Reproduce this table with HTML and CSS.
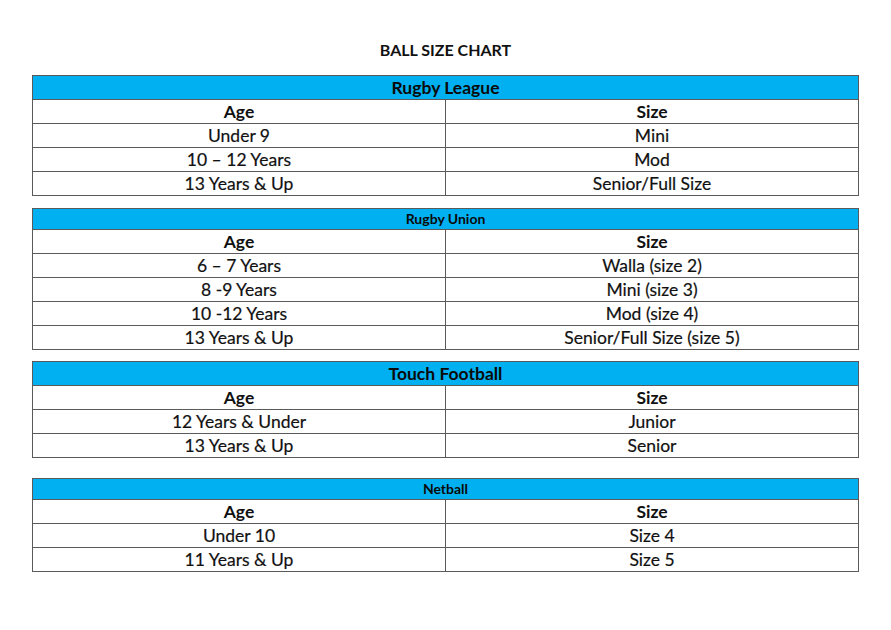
FILE: index.html
```html
<!DOCTYPE html>
<html>
<head>
<meta charset="utf-8">
<link rel="stylesheet" href="styles.css">
</head>
<body>
<div class="page">
  <h1 class="title">BALL SIZE CHART</h1>
  <div class="charts">
    <table class="chart">
      <tr><th colspan="2" class="sport">Rugby League</th></tr>
      <tr><th>Age</th><th>Size</th></tr>
      <tr><td>Under 9</td><td>Mini</td></tr>
      <tr><td>10 – 12 Years</td><td>Mod</td></tr>
      <tr><td>13 Years &amp; Up</td><td>Senior/Full Size</td></tr>
    </table>
    <table class="chart">
      <tr><th colspan="2" class="sport small">Rugby Union</th></tr>
      <tr><th>Age</th><th>Size</th></tr>
      <tr><td>6 – 7 Years</td><td>Walla (size 2)</td></tr>
      <tr><td>8 -9 Years</td><td>Mini (size 3)</td></tr>
      <tr><td>10 -12 Years</td><td>Mod (size 4)</td></tr>
      <tr><td>13 Years &amp; Up</td><td>Senior/Full Size (size 5)</td></tr>
    </table>
    <table class="chart">
      <tr><th colspan="2" class="sport">Touch Football</th></tr>
      <tr><th>Age</th><th>Size</th></tr>
      <tr><td>12 Years &amp; Under</td><td>Junior</td></tr>
      <tr><td>13 Years &amp; Up</td><td>Senior</td></tr>
    </table>
    <table class="chart last">
      <tr><th colspan="2" class="sport small">Netball</th></tr>
      <tr><th>Age</th><th>Size</th></tr>
      <tr><td>Under 10</td><td>Size 4</td></tr>
      <tr><td>11 Years &amp; Up</td><td>Size 5</td></tr>
    </table>
  </div>
</div>
</body>
</html>
```
FILE: styles.css
```css
html, body {
  margin: 0;
  padding: 0;
  background: #ffffff;
}
body {
  font-family: Lato, "Open Sans", "Liberation Sans", sans-serif;
  color: #111;
}
.page {
  width: 891px;
  height: 630px;
  padding-top: 39px;
  box-sizing: border-box;
}
.title {
  margin: 0;
  height: 36px;
  font-size: 16px;
  font-weight: bold;
  text-align: center;
  line-height: 22px;
  color: #111;
}
.charts {
  display: flex;
  flex-direction: column;
  gap: 11px;
  padding-left: 32px;
}
.chart {
  width: 827px;
  border-collapse: collapse;
  table-layout: fixed;
}
.chart:first-child {
  margin-bottom: 1px;
}
.chart.last {
  margin-top: 9px;
}
.chart th,
.chart td {
  border: 1px solid #5a5a5a;
  height: 23px;
  padding: 0;
  text-align: center;
  font-size: 17.5px;
  line-height: 20px;
  width: 50%;
  color: #111;
}
.chart th {
  font-weight: bold;
}
.chart td {
  font-weight: normal;
  -webkit-text-stroke: 0.2px #111;
}
.chart .sport {
  background: #00b0f0;
  color: #0a0a0a;
}
.chart .sport.small {
  font-size: 14px;
  height: 20px;
  line-height: 18px;
}
```
